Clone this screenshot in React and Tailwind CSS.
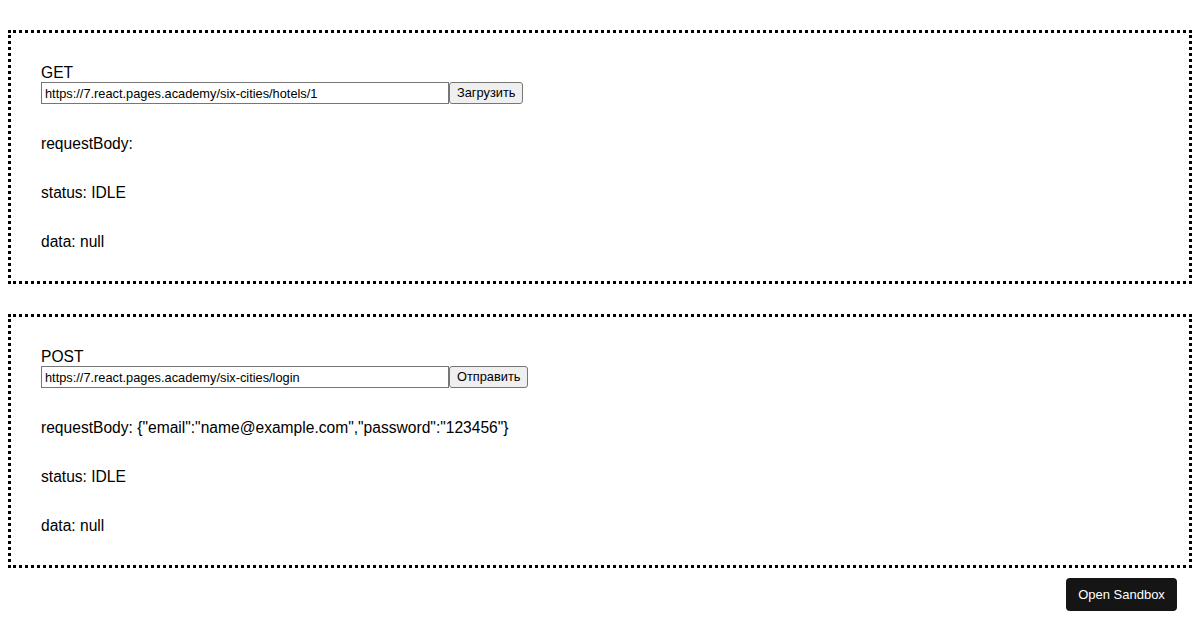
const font = { fontFamily: '"Liberation Sans", Arial, sans-serif' };

const RequestBox = ({ method, url, buttonLabel, body }) => (
  <section className="mx-2 border-[3px] border-dotted border-black px-[30px] pt-[31px] pb-[30px] text-[15.6px] leading-[18px] text-black">
    <div>{method}</div>
    <div className="flex items-center">
      <input
        type="text"
        defaultValue={url}
        className="h-[22px] w-[408px] border border-[#767676] px-[3px] text-[12.8px] text-black outline-none"
      />
      <button className="h-[22px] rounded-[3px] border border-[#767676] bg-[#efefef] px-[7px] text-[12.8px] text-black">
        {buttonLabel}
      </button>
    </div>
    <p className="mt-[31px]">requestBody: {body}</p>
    <p className="mt-[31px]">status: IDLE</p>
    <p className="mt-[31px]">data: null</p>
  </section>
);

export default function App() {
  return (
    <div className="relative h-[630px] w-[1200px] bg-white pt-[30px]" style={font}>
      <RequestBox
        method="GET"
        url="https://7.react.pages.academy/six-cities/hotels/1"
        buttonLabel="Загрузить"
        body=""
      />
      <div className="h-[30px]" />
      <RequestBox
        method="POST"
        url="https://7.react.pages.academy/six-cities/login"
        buttonLabel="Отправить"
        body={'{"email":"name@example.com","password":"123456"}'}
      />
      <button className="absolute bottom-[19px] right-[23px] h-[33px] w-[111px] rounded-[4px] bg-[#151515] text-[13px] text-white">
        Open Sandbox
      </button>
    </div>
  );
}
